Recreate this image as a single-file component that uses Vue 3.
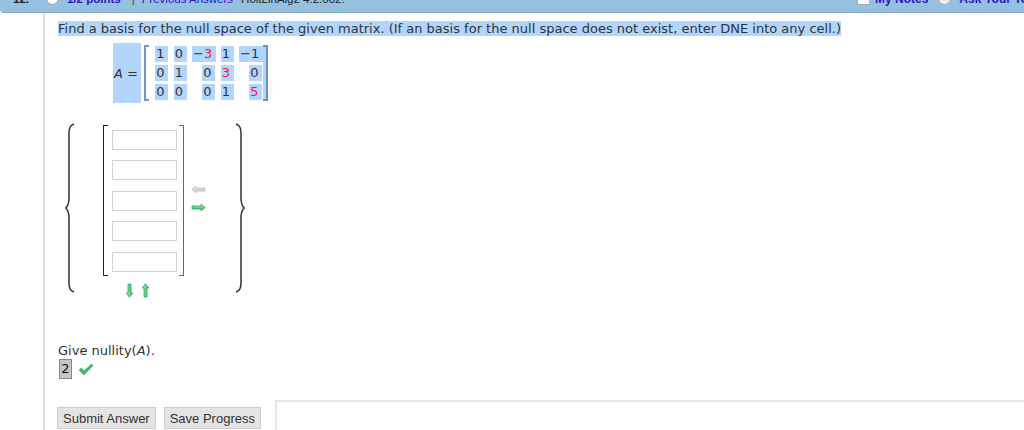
<script setup>
const rows = [
  [{ t: '1' }, { t: '0' }, { t: '−', r: '3' }, { t: '1' }, { t: '−1' }],
  [{ t: '0' }, { t: '1' }, { t: '0' }, { r: '3' }, { t: '0' }],
  [{ t: '0' }, { t: '0' }, { t: '0' }, { t: '1' }, { r: '5' }]
]
const cells = [1, 2, 3, 4, 5]
</script>

<template>
  <div class="page">
    <header class="bar">
      <div class="bar-left">
        <span class="num">12.</span>
        <span class="dot"><i></i></span>
        <a class="lnk">1/2 points</a>
        <span class="sep">|</span>
        <a class="lnk reg">Previous Answers</a>
        <span class="ref">HoltLinAlg2 4.2.002.</span>
      </div>
      <div class="bar-right">
        <span class="box"></span>
        <a class="lnk">My Notes</a>
        <span class="circ"></span>
        <a class="lnk">Ask Your Teacher</a>
      </div>
    </header>
    <main class="body">
      <p class="q"><span class="sel">Find a basis for the null space of the given matrix. (If an basis for the null space does not exist, enter DNE into any cell.)</span></p>
      <div class="eq">
        <div class="lhs"><em>A</em>&nbsp;=</div>
        <div class="matrix">
          <div v-for="(row, i) in rows" :key="i" class="mrow">
            <div v-for="(c, j) in row" :key="j" class="mcell"><span class="sel">{{ c.t }}<b v-if="c.r">{{ c.r }}</b></span></div>
          </div>
        </div>
      </div>
      <svg width="0" height="0" class="defs">
        <defs>
          <linearGradient id="gh" x1="0" y1="0" x2="0" y2="1"><stop offset="0" stop-color="#a8f0bd"/><stop offset="1" stop-color="#2fb565"/></linearGradient>
          <linearGradient id="gv" x1="0" y1="0" x2="1" y2="0"><stop offset="0" stop-color="#a8f0bd"/><stop offset="1" stop-color="#2fb565"/></linearGradient>
          <linearGradient id="gg" x1="0" y1="0" x2="0" y2="1"><stop offset="0" stop-color="#eeeeee"/><stop offset="1" stop-color="#c4c4c4"/></linearGradient>
        </defs>
      </svg>
      <div class="vec-area">
        <svg class="brace" width="10" height="170" viewBox="0 0 10 170"><path d="M9 1C5 2 4 5 4 10V75C4 80 3 83 .7 85C3 87 4 90 4 95V160C4 165 5 168 9 169" fill="none" stroke="#333" stroke-width="1.5"/></svg>
        <div class="vec-col">
          <div class="vec-row">
            <div class="vec">
              <div v-for="c in cells" :key="c" class="cell"></div>
            </div>
            <div class="h-arrows">
              <svg width="15" height="9" viewBox="0 0 15 9"><path d="M.8 4.5L5 1.2V3H14V6H5V7.8Z" fill="url(#gg)" stroke="#a8a8a8" stroke-width=".6"/></svg>
              <svg width="15" height="9" viewBox="0 0 15 9"><path d="M14.2 4.5L10 1.2V3H1V6H10V7.8Z" fill="url(#gh)" stroke="#138a45" stroke-width=".6"/></svg>
            </div>
          </div>
          <div class="v-arrows">
            <svg width="9" height="15" viewBox="0 0 9 15"><path d="M4.5 14.2L1.2 10H3V1H6V10H7.8Z" fill="url(#gv)" stroke="#138a45" stroke-width=".6"/></svg>
            <svg width="9" height="15" viewBox="0 0 9 15"><path d="M4.5 .8L1.2 5H3V14H6V5H7.8Z" fill="url(#gv)" stroke="#138a45" stroke-width=".6"/></svg>
          </div>
        </div>
        <svg class="brace" width="10" height="170" viewBox="0 0 10 170"><path d="M1 1C5 2 6 5 6 10V75C6 80 7 83 9.3 85C7 87 6 90 6 95V160C6 165 5 168 1 169" fill="none" stroke="#333" stroke-width="1.5"/></svg>
      </div>
      <p class="give">Give nullity(<em>A</em>).</p>
      <div class="ans">
        <span class="val">2</span>
        <svg width="16" height="13" viewBox="0 0 16 13"><path d="M1 7L3.5 5L6 8L13.5 1L15 2.5L6 12Z" fill="#3fb765" stroke="#2a9c50" stroke-width=".5"/></svg>
      </div>
      <div class="actions">
        <button class="btn first">Submit Answer</button>
        <button class="btn">Save Progress</button>
        <div class="panel"></div>
      </div>
    </main>
  </div>
</template>

<style>
html, body { margin: 0; background: #fff; overflow: hidden; }
</style>

<style scoped>
.page { width: 1024px; height: 430px; overflow: hidden; font-family: "DejaVu Sans", sans-serif; color: #333; font-size: 13px; }
.bar { height: 12px; background: #95c0e0; border-bottom: 1px solid #8aa9bf; border-radius: 0 0 0 4px; display: flex; overflow: hidden; font-family: "Liberation Sans", sans-serif; font-size: 11.5px; line-height: 12px; white-space: nowrap; }
.bar-left, .bar-right { display: flex; align-items: center; height: 12px; transform: translateY(-7px); }
.bar-left { flex: 1; padding-left: 13px; }
.bar-right { flex: none; width: 167px; font-size: 12px; }
.num { font-weight: bold; color: #222; width: 33px; flex: none; }
.dot { width: 11px; height: 11px; border-radius: 50%; background: #fff; border: 1px solid #999; margin: -2px 8px 0 0; display: flex; align-items: center; justify-content: center; flex: none; }
.dot i { width: 4px; height: 4px; background: #3b4; border-radius: 50%; }
.lnk { color: #2a16c8; font-weight: bold; flex: none; }
.lnk.reg { font-weight: normal; }
.sep { margin: 0 7px 0 11px; color: #444; }
.ref { margin-left: 8px; color: #222; }
.box { width: 11px; height: 11px; background: #fff; border: 1px solid #aaa; margin: -2px 5px 0 0; flex: none; }
.circ { width: 11px; height: 11px; background: #eee; border: 1px solid #aaa; border-radius: 50%; margin: -2px 8px 0 10px; flex: none; }
.body { margin-left: 43px; border-left: 2px solid #dcdcdc; height: 417px; padding-left: 13px; box-sizing: border-box; }
.sel { background: #b2d5fd; }
.q { margin: 0; padding-top: 8px; line-height: 16px; font-size: 13px; white-space: nowrap; }
.eq { display: flex; align-items: flex-start; margin: 6px 0 0 55px; height: 60px; }
.lhs { width: 28px; height: 60px; padding-left: 1px; box-sizing: border-box; background: #b2d5fd; display: flex; align-items: center; font-size: 13px; white-space: nowrap; }
.matrix { margin: 2px 0 0 3px; height: 56px; width: 124px; padding: 1px 0 0 9px; box-sizing: border-box; border-left: 2px solid #6f93bd; border-right: 2px solid #6f93bd; position: relative; display: flex; flex-direction: column; gap: 3px; }
.matrix::before, .matrix::after { content: ""; position: absolute; top: 0; bottom: 0; width: 3px; border-top: 2px solid #6f93bd; border-bottom: 2px solid #6f93bd; box-sizing: border-box; }
.matrix::before { left: 0; }
.matrix::after { right: 0; background: #b2d5fd; }
.mrow { display: grid; grid-template-columns: 13px 13px 23px 13px 23px; column-gap: 5.5px; height: 16px; position: relative; z-index: 1; }
.mcell { text-align: right; line-height: 16px; font-size: 13px; }
.mcell .sel { display: inline-block; padding: 0 3.5px 0 1px; line-height: 16px; white-space: nowrap; }
.mcell b { color: #f01a28; font-weight: normal; }
.defs { position: absolute; }
.vec-area { display: flex; align-items: flex-start; margin: 20px 0 0 7px; height: 175px; }
.brace { flex: none; display: block; }
.vec-col { width: 150px; flex: none; padding-left: 10px; box-sizing: content-box; margin-left: 0; }
.vec-row { display: flex; margin: 2px 0 0 18px; }
.vec { width: 81px; height: 151px; padding: 0 8px; box-sizing: border-box; border-left: 1px solid #222; border-right: 1px solid #666; display: flex; flex-direction: column; gap: 10.5px; justify-content: center; flex: none; background: linear-gradient(#222,#222) 0 0/4px 1px no-repeat, linear-gradient(#222,#222) 0 100%/4px 1px no-repeat, linear-gradient(#666,#666) 100% 0/4px 1px no-repeat, linear-gradient(#666,#666) 100% 100%/4px 1px no-repeat; }
.cell { height: 20px; width: 65px; border: 1px solid #d2d2d2; background: #fff; flex: none; box-sizing: border-box; }
.h-arrows { display: flex; flex-direction: column; gap: 9px; margin: 60px 0 0 7px; }
.h-arrows svg, .v-arrows svg { display: block; }
.v-arrows { display: flex; gap: 7px; margin: 7px 0 0 40px; }
.give { margin: 45px 0 0; font-size: 13px; line-height: 16px; }
.ans { display: flex; align-items: center; gap: 6px; margin-left: 1px; height: 20px; }
.val { width: 11px; height: 18px; background: #c6c6c6; border: 1px solid #888; font-size: 13px; line-height: 18px; text-align: center; color: #111; }
.actions { display: flex; align-items: flex-start; margin-top: 21px; }
.btn { font-family: "Liberation Sans", sans-serif; font-size: 13px; color: #333; background: #e4e4e4; border: 1px solid #ccc; height: 22px; padding: 0 5px; margin: 7px 8px 0 0; border-radius: 0; }
.btn.first { margin-left: -1px; }
.panel { flex: 1; height: 40px; border: 2px solid #e6e6e6; margin-left: 6px; margin-right: -2px; }
</style>
